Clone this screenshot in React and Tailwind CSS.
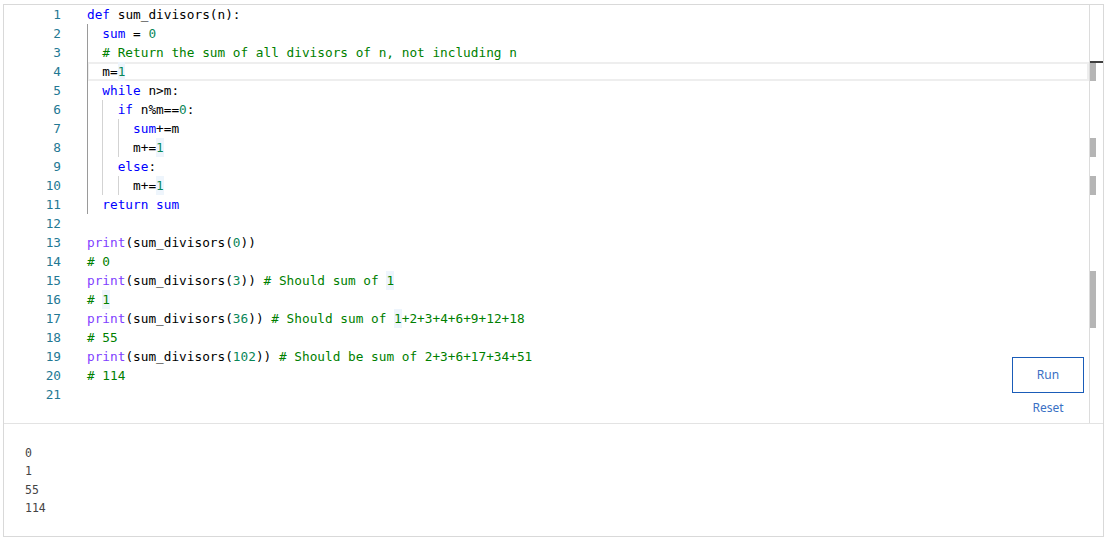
import React from 'react';

const KW = 'text-[#0000ff]';
const FN = 'text-[#8040ff]';
const NUM = 'text-[#098658]';
const CMT = 'text-[#008000]';
const TXT = 'text-[#000000]';
const HL = 'bg-[#eef5fc]';

// each line: indent (in 2-space steps) + token list [text, class, highlighted?]
const lines = [
  { indent: 0, tokens: [['def', KW], [' sum_divisors(n):', TXT]] },
  { indent: 1, tokens: [['sum', KW], [' = ', TXT], ['0', NUM]] },
  { indent: 1, tokens: [['# Return the sum of all divisors of n, not including n', CMT]] },
  { indent: 1, tokens: [['m=', TXT], ['1', NUM, true]], current: true },
  { indent: 1, tokens: [['while', KW], [' n>m:', TXT]] },
  { indent: 2, tokens: [['if', KW], [' n%m==', TXT], ['0', NUM], [':', TXT]] },
  { indent: 3, tokens: [['sum', KW], ['+=m', TXT]] },
  { indent: 3, tokens: [['m+=', TXT], ['1', NUM, true]] },
  { indent: 2, tokens: [['else', KW], [':', TXT]] },
  { indent: 3, tokens: [['m+=', TXT], ['1', NUM, true]] },
  { indent: 1, tokens: [['return', KW], [' ', TXT], ['sum', KW]] },
  { indent: 0, tokens: [] },
  { indent: 0, tokens: [['print', FN], ['(sum_divisors(', TXT], ['0', NUM], ['))', TXT]] },
  { indent: 0, tokens: [['# 0', CMT]] },
  { indent: 0, tokens: [['print', FN], ['(sum_divisors(', TXT], ['3', NUM], [')) ', TXT], ['# Should sum of ', CMT], ['1', CMT, true]] },
  { indent: 0, tokens: [['# ', CMT], ['1', CMT, true]] },
  { indent: 0, tokens: [['print', FN], ['(sum_divisors(', TXT], ['36', NUM], [')) ', TXT], ['# Should sum of ', CMT], ['1', CMT, true], ['+2+3+4+6+9+12+18', CMT]] },
  { indent: 0, tokens: [['# 55', CMT]] },
  { indent: 0, tokens: [['print', FN], ['(sum_divisors(', TXT], ['102', NUM], [')) ', TXT], ['# Should be sum of 2+3+6+17+34+51', CMT]] },
  { indent: 0, tokens: [['# 114', CMT]] },
  { indent: 0, tokens: [] },
];

const mono = { fontFamily: '"DejaVu Sans Mono", "Liberation Mono", monospace' };

const CodeLine = ({ line, n }) => (
  <div className="flex h-[19px] items-center">
    <div className="w-[57px] shrink-0 text-right text-[#237893]">{n}</div>
    <div className="ml-[26px] flex-1 h-full relative">
      {line.current && (
        <div className="absolute inset-0 -top-[0.5px] border-2 border-[#eeeeee] pointer-events-none" />
      )}
      <div className="relative flex h-full items-center whitespace-pre">
        {Array.from({ length: line.indent }).map((_, i) => (
          <span
            key={i}
            className={`inline-block h-full w-[2ch] border-l ${
              i === 0 ? 'border-[#9a9a9a]' : 'border-[#d3d3d3]'
            }`}
          />
        ))}
        {line.tokens.map(([t, c, hl], i) => (
          <span key={i} className={`${c} ${hl ? HL : ''}`}>
            {t}
          </span>
        ))}
      </div>
    </div>
  </div>
);

const App = () => {
  return (
    <div className="pt-[4px] pl-[3px] bg-white min-h-screen">
      <div className="w-[1101px] h-[533px] border border-[#d9d9d9] flex flex-col bg-white">
        <div className="relative h-[419px] border-b border-[#e3e3e3] flex shrink-0">
          <div className="flex-1 text-[12.75px]" style={mono}>
            {lines.map((l, i) => (
              <CodeLine key={i} line={l} n={i + 1} />
            ))}
          </div>

          {/* overview ruler */}
          <div className="relative w-[14px] border-l border-[#dcdcdc]">
            <div className="absolute left-0 right-0 top-[56px] h-[2px] bg-[#3f3f3f]" />
            <div className="absolute left-0 w-[6px] top-[58px] h-[18px] bg-[#b5b5b5]" />
            <div className="absolute left-0 w-[6px] top-[133px] h-[19px] bg-[#b5b5b5]" />
            <div className="absolute left-0 w-[6px] top-[171px] h-[19px] bg-[#b5b5b5]" />
            <div className="absolute left-0 w-[6px] top-[266px] h-[57px] bg-[#b5b5b5]" />
          </div>

          {/* run / reset */}
          <div
            className="absolute left-[1008px] top-[352px] flex flex-col items-center"
            style={{ fontFamily: '"Noto Sans", "Open Sans", sans-serif' }}
          >
            <button className="w-[72px] h-[36px] border border-[#1a5cb8] text-[12px] text-[#3a70c4] bg-white">
              Run
            </button>
            <button className="mt-[7px] text-[12px] leading-[16px] text-[#3a70c4]">Reset</button>
          </div>
        </div>

        <div
          className="flex-1 pl-[21px] pt-[20px] text-[11.5px] leading-[18.3px] text-[#444]"
          style={mono}
        >
          <div>0</div>
          <div>1</div>
          <div>55</div>
          <div>114</div>
        </div>
      </div>
    </div>
  );
};

export default App;
